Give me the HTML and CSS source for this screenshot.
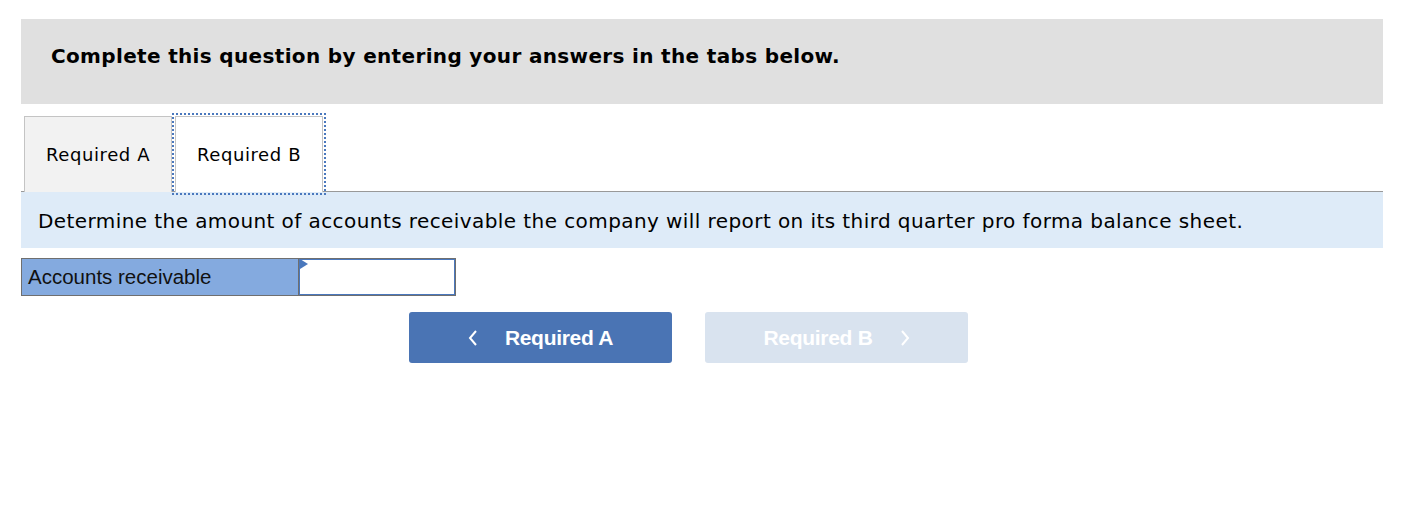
FILE: index.html
```html
<!DOCTYPE html>
<html>
<head>
<meta charset="utf-8">
<link rel="stylesheet" href="styles.css">
</head>
<body>
<div class="page">
  <div class="header">Complete this question by entering your answers in the tabs below.</div>
  <div class="tabs">
    <div class="tab tab-a">Required A</div>
    <div class="tab tab-b">Required B</div>
  </div>
  <div class="instruction">Determine the amount of accounts receivable the company will report on its third quarter pro forma balance sheet.</div>
  <div class="answer-row">
    <div class="label">Accounts receivable</div>
    <div class="input"><span class="flag"></span></div>
  </div>
  <div class="nav">
    <button class="btn btn-prev"><svg class="chev" width="10" height="18" viewBox="0 0 10 18"><path d="M8 2 L2 9 L8 16" fill="none" stroke="#fff" stroke-width="2"/></svg><span>Required A</span></button>
    <button class="btn btn-next"><span>Required B</span><svg class="chev" width="10" height="18" viewBox="0 0 10 18"><path d="M2 2 L8 9 L2 16" fill="none" stroke="#fff" stroke-width="2"/></svg></button>
  </div>
</div>
</body>
</html>
```
FILE: styles.css
```css
html, body {
  margin: 0;
  padding: 0;
  background: #ffffff;
}
.page {
  padding: 19px 23px 0 21px;
  font-family: "DejaVu Sans", Verdana, sans-serif;
  color: #000;
}
.header {
  background: #e0e0e0;
  height: 85px;
  box-sizing: border-box;
  padding: 25px 0 0 30px;
  line-height: 24px;
  font-weight: bold;
  font-size: 20px;
  letter-spacing: 0.34px;
}
.tabs {
  display: flex;
  padding: 12px 0 0 3px;
  border-bottom: 1px solid #999;
  height: 75px;
}
.tab {
  box-sizing: border-box;
  width: 148px;
  height: 76px;
  display: flex;
  align-items: center;
  justify-content: center;
  font-size: 18px;
  letter-spacing: 0.6px;
  border: 1px solid #c4c4c4;
  border-bottom: none;
}
.tab-a {
  background: #f2f2f2;
}
.tab-b {
  background: #fff;
  margin-left: 3px;
  outline: 2px dotted #4a78bd;
  outline-offset: 1px;
  position: relative;
  z-index: 1;
}
.instruction {
  background: #deebf8;
  height: 56px;
  box-sizing: border-box;
  display: flex;
  align-items: center;
  padding: 2px 0 0 17px;
  font-size: 20px;
  letter-spacing: 0.42px;
}
.answer-row {
  display: flex;
  margin-top: 10px;
  height: 38px;
}
.label {
  box-sizing: border-box;
  width: 278px;
  background: #84aadf;
  border: 1px solid #6f6f6f;
  font-family: "Liberation Sans", Arial, sans-serif;
  font-size: 20.5px;
  display: flex;
  align-items: center;
  padding-left: 6px;
  color: #111;
}
.input {
  box-sizing: border-box;
  width: 157px;
  border: 1px solid #6f6f6f;
  border-left: none;
  position: relative;
  background: #fff;
  box-shadow: inset 0 0 0 1px #4a78bd;
}
.flag {
  position: absolute;
  left: 1px;
  top: 1px;
  width: 0;
  height: 0;
  border-top: 5px solid transparent;
  border-bottom: 5px solid transparent;
  border-left: 8px solid #4a78bd;
  transform: translateY(-1px);
}
.nav {
  display: flex;
  gap: 33px;
  margin: 16px 0 0 388px;
}
.btn {
  width: 263px;
  height: 51px;
  border: none;
  border-radius: 3px;
  color: #fff;
  font-family: "Liberation Sans", Arial, sans-serif;
  font-weight: bold;
  font-size: 21px;
  letter-spacing: -0.3px;
  display: flex;
  align-items: center;
  justify-content: center;
  gap: 27px;
  padding: 0;
}
.btn-prev {
  background: #4a74b4;
}
.btn-next {
  background: #d9e3ef;
}
.chev {
  display: block;
}
```
